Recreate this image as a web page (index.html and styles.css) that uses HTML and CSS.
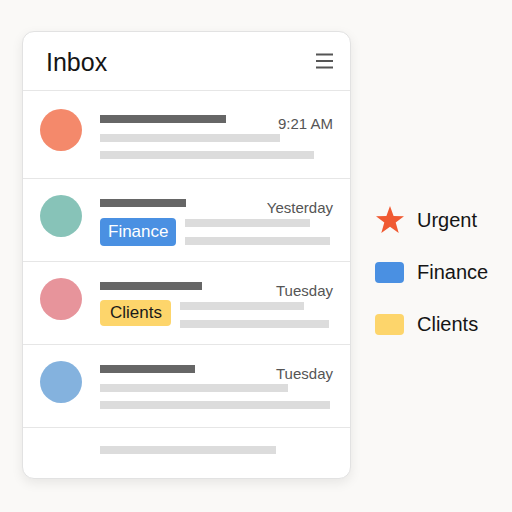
FILE: index.html
```html
<!DOCTYPE html>
<html>
<head>
<meta charset="utf-8">
<link rel="stylesheet" href="styles.css">
</head>
<body>
<div class="page">
  <div class="card">
    <div class="header">
      <span class="title">Inbox</span>
      <svg class="menu" width="17" height="16" viewBox="0 0 17 16"><path d="M0 1.5H17M0 8H17M0 14.5H17" stroke="#555" stroke-width="1.8"/></svg>
    </div>
    <div class="row first">
      <div class="avatar a1"></div>
      <div class="content">
        <div class="top"><div class="bar dark" style="width:126px"></div><span class="time">9:21 AM</span></div>
        <div class="bar light l1" style="width:180px"></div>
        <div class="bar light l2" style="width:214px"></div>
      </div>
    </div>
    <div class="row">
      <div class="avatar a2"></div>
      <div class="content">
        <div class="top"><div class="bar dark" style="width:86px"></div><span class="time">Yesterday</span></div>
        <div class="tagline">
          <span class="tag finance">Finance</span>
          <div class="tagbars">
            <div class="bar light" style="width:125px"></div>
            <div class="bar light" style="width:145px"></div>
          </div>
        </div>
      </div>
    </div>
    <div class="row">
      <div class="avatar a3"></div>
      <div class="content">
        <div class="top"><div class="bar dark" style="width:102px"></div><span class="time">Tuesday</span></div>
        <div class="tagline">
          <span class="tag clients">Clients</span>
          <div class="tagbars">
            <div class="bar light" style="width:124px"></div>
            <div class="bar light" style="width:149px"></div>
          </div>
        </div>
      </div>
    </div>
    <div class="row">
      <div class="avatar a4"></div>
      <div class="content">
        <div class="top"><div class="bar dark" style="width:95px"></div><span class="time">Tuesday</span></div>
        <div class="bar light l1" style="width:188px"></div>
        <div class="bar light l2" style="width:230px"></div>
      </div>
    </div>
    <div class="row last">
      <div class="bar light" style="width:176px"></div>
    </div>
  </div>
  <div class="legend">
    <div class="item">
      <svg class="icon" width="30" height="30" viewBox="0 0 30 30"><polygon points="15,1 18.6,11 29,11.2 20.7,17.6 23.7,28 15,21.8 6.3,28 9.3,17.6 1,11.2 11.4,11" fill="#f05a32"/></svg>
      <span>Urgent</span>
    </div>
    <div class="item">
      <span class="swatch blue"></span>
      <span>Finance</span>
    </div>
    <div class="item">
      <span class="swatch yellow"></span>
      <span>Clients</span>
    </div>
  </div>
</div>
</body>
</html>
```
FILE: styles.css
```css
* { box-sizing: border-box; }
html, body { margin: 0; padding: 0; }
body {
  background: #faf9f7;
  font-family: "Liberation Sans", Arial, sans-serif;
  width: 512px;
  height: 512px;
  overflow: hidden;
}
.page {
  display: flex;
  align-items: flex-start;
  gap: 24px;
  padding: 31px 0 0 22px;
}
.card {
  width: 329px;
  height: 448px;
  background: #fff;
  border: 1px solid #e2e2e2;
  border-radius: 12px;
  box-shadow: 0 4px 12px rgba(0,0,0,0.08);
  overflow: hidden;
  display: flex;
  flex-direction: column;
}
.header {
  height: 58px;
  display: flex;
  align-items: center;
  justify-content: space-between;
  padding: 0 17px 0 23px;
  flex-shrink: 0;
}
.title {
  font-size: 25px;
  color: #151515;
  margin-top: 3px;
}
.menu { display: block; }
.row {
  border-top: 1px solid #e6e6e6;
  height: 83px;
  display: flex;
  align-items: flex-start;
  gap: 18px;
  padding: 16px 17px 0 17px;
  flex-shrink: 0;
}
.row.first { height: 88px; padding-top: 18px; }
.row.last { height: 51px; padding: 18px 0 0 77px; }
.avatar {
  width: 42px;
  height: 42px;
  border-radius: 50%;
  flex-shrink: 0;
}
.a1 { background: #f4896b; }
.a2 { background: #87c3b8; }
.a3 { background: #e7949b; }
.a4 { background: #84b2de; }
.content {
  flex: 1;
  display: flex;
  flex-direction: column;
  margin-top: 2px;
}
.row.first .content { margin-top: 4px; }
.top {
  display: flex;
  justify-content: space-between;
  align-items: flex-start;
  height: 18px;
}
.bar { height: 8px; }
.dark { background: #666; margin-top: 2px; }
.light { background: #dcdcdc; }
.l1 { margin-top: 3px; }
.l2 { margin-top: 9px; }
.time {
  font-size: 15px;
  line-height: 18px;
  color: #555;
  margin-top: 2px;
}
.tagline {
  display: flex;
  gap: 9px;
  margin-top: 3px;
  align-items: flex-start;
}
.tag {
  font-size: 17px;
  height: 28px;
  line-height: 28px;
  border-radius: 4px;
}
.finance { background: #4a90e2; color: #fff; padding: 0 8px; }
.clients { background: #fdd56b; color: #1a1a1a; height: 26px; line-height: 26px; padding: 0 9px 0 10px; margin-top: -1px; }
.tagbars {
  display: flex;
  flex-direction: column;
  gap: 10px;
  padding-top: 1px;
}
.legend {
  display: flex;
  flex-direction: column;
  gap: 22px;
  margin-top: 174px;
}
.item {
  display: flex;
  align-items: center;
  gap: 12px;
  height: 30px;
  font-size: 20px;
  color: #151515;
}
.icon { display: block; width: 30px; height: 30px; }
.swatch {
  width: 29px;
  height: 21px;
  border-radius: 4px;
  margin: 0 1px 0 0;
  display: block;
}
.blue { background: #4a90e2; }
.yellow { background: #fdd56b; }
```
